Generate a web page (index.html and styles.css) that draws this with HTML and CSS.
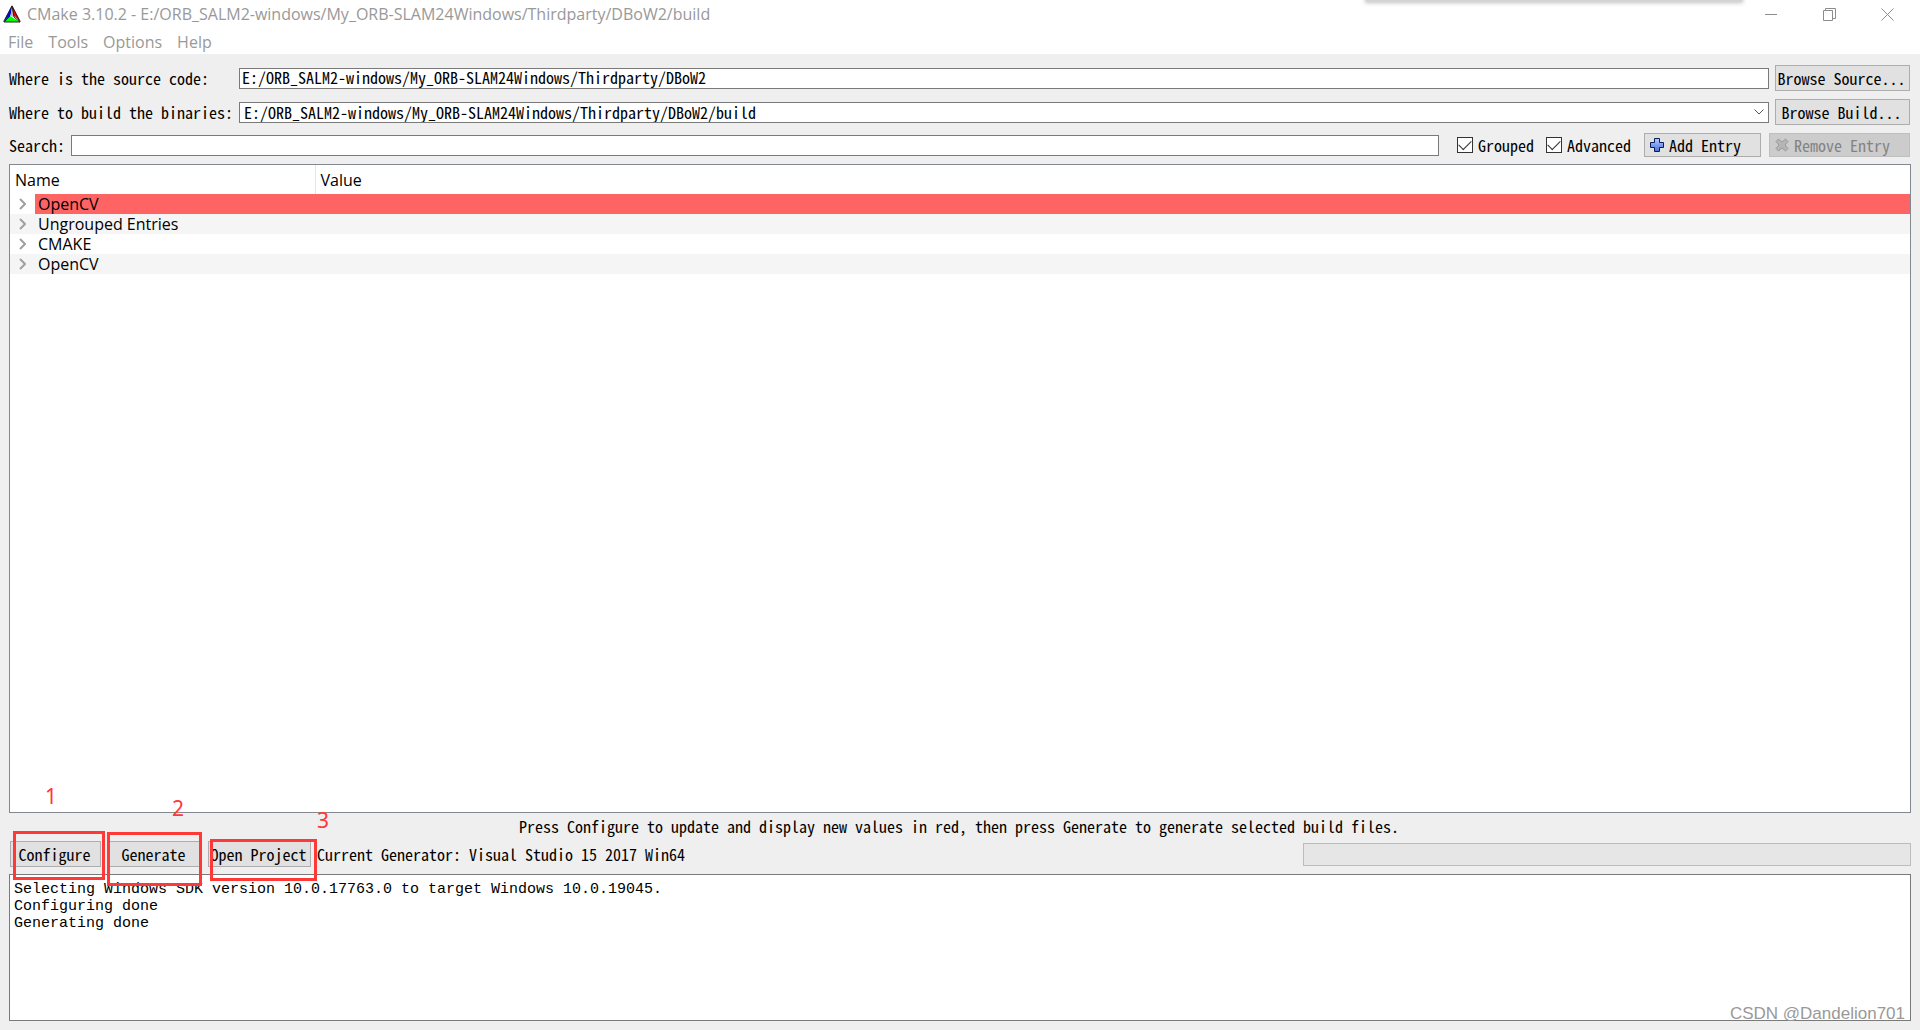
FILE: index.html
```html
<!DOCTYPE html>
<html lang="en">
<head>
<meta charset="utf-8">
<title>CMake 3.10.2 - E:/ORB_SALM2-windows/My_ORB-SLAM24Windows/Thirdparty/DBoW2/build</title>
<link rel="stylesheet" href="styles.css">
</head>
<body>
<header class="titlebar">
  <svg class="logo" width="18" height="18" viewBox="0 0 18 18" aria-hidden="true">
    <path d="M9 0 0 17 8 10Z" fill="#00f"/>
    <path d="M9 0 18 17 10 10Z" fill="#f00"/>
    <path d="M0 17 7 11 17 17Z" fill="#0f0"/>
    <path d="M9 5 11 12 7 11Z" fill="#bbb"/>
    <path d="M9 1 1 17H17ZM9 1 11 12 17 17M1 17 7 11" fill="none" stroke="#222"/>
  </svg>
  <h1 class="title">CMake 3.10.2 - E:/ORB_SALM2-windows/My_ORB-SLAM24Windows/Thirdparty/DBoW2/build</h1>
  <div class="window-buttons">
    <button type="button" aria-label="Minimize"><svg width="13" height="13" viewBox="0 0 13 13"><path d="M0 6.500H12"/></svg></button>
    <button type="button" aria-label="Restore"><svg width="13" height="13" viewBox="0 0 13 13"><path d="M.5 2.500H9.500V12.500H.5ZM2.500 2V.5H12.500V10.500H10"/></svg></button>
    <button type="button" aria-label="Close"><svg width="13" height="13" viewBox="0 0 13 13"><path d="M.5 .5 12.500 12.500M12.500 .5 .5 12.500"/></svg></button>
  </div>
  <div class="docked-edge"></div>
</header>
<nav class="menu">
  <button type="button">File</button>
  <button type="button">Tools</button>
  <button type="button">Options</button>
  <button type="button">Help</button>
</nav>
<main class="window">
  <form class="settings">
    <div class="path-row">
      <label class="path-label" for="source">Where is the source code:</label>
      <input class="field" id="source" type="text" value="E:/ORB_SALM2-windows/My_ORB-SLAM24Windows/Thirdparty/DBoW2">
      <button class="btn browse" type="button">Browse Source...</button>
    </div>
    <div class="path-row">
      <label class="path-label" for="build">Where to build the binaries:</label>
      <div class="combo">
        <select class="field" id="build"><option>E:/ORB_SALM2-windows/My_ORB-SLAM24Windows/Thirdparty/DBoW2/build</option></select>
        <svg class="combo-arrow" width="10" height="6" viewBox="0 0 10 6" aria-hidden="true"><path d="M.5 .5 5 5 9.500 .5"/></svg>
      </div>
      <button class="btn browse" type="button">Browse Build...</button>
    </div>
    <div class="search-row">
      <label class="search-label" for="search">Search:</label>
      <input class="field" id="search" type="text">
      <div class="checks">
        <label class="check"><input type="checkbox" checked>Grouped</label>
        <label class="check"><input type="checkbox" checked>Advanced</label>
      </div>
      <button class="btn add" type="button">
        <svg width="14" height="14" viewBox="0 0 14 14" aria-hidden="true"><defs><linearGradient id="plus" x2="0" y2="1"><stop stop-color="#b4ccff"/><stop offset="1" stop-color="#4670d8"/></linearGradient></defs><path d="M4.500 .5H9.500V4.500H13.500V9.500H9.500V13.500H4.500V9.500H.5V4.500H4.500Z" fill="url(#plus)" stroke="#0a1a5c"/></svg>
        Add Entry
      </button>
      <button class="btn remove" type="button" disabled>
        <svg width="14" height="14" viewBox="0 0 14 14" aria-hidden="true"><path d="M3.500 1 7 4 10.500 1 13 3.500 10 7 13 10.500 10.500 13 7 10 3.500 13 1 10.500 4 7 1 3.500Z" fill="#b5b5b5" stroke="#9a9a9a"/></svg>
        Remove Entry
      </button>
    </div>
  </form>
  <section class="tree">
    <table>
      <thead><tr><th class="name-col">Name</th><th>Value</th></tr></thead>
      <tbody>
        <tr class="new"><td><div class="cell"><span class="branch"><svg width="7" height="12" viewBox="0 0 7 12"><path d="M1 1 6 6 1 11"/></svg></span><span class="entry">OpenCV</span></div></td><td></td></tr>
        <tr><td><div class="cell"><span class="branch"><svg width="7" height="12" viewBox="0 0 7 12"><path d="M1 1 6 6 1 11"/></svg></span><span class="entry">Ungrouped Entries</span></div></td><td></td></tr>
        <tr><td><div class="cell"><span class="branch"><svg width="7" height="12" viewBox="0 0 7 12"><path d="M1 1 6 6 1 11"/></svg></span><span class="entry">CMAKE</span></div></td><td></td></tr>
        <tr><td><div class="cell"><span class="branch"><svg width="7" height="12" viewBox="0 0 7 12"><path d="M1 1 6 6 1 11"/></svg></span><span class="entry">OpenCV</span></div></td><td></td></tr>
      </tbody>
    </table>
  </section>
  <p class="hint">Press Configure to update and display new values in red, then press Generate to generate selected build files.</p>
  <div class="actions">
    <button class="btn action" type="button">Configure</button>
    <button class="btn action" type="button">Generate</button>
    <button class="btn open" type="button">Open Project</button>
    <span class="generator">Current Generator: Visual Studio 15 2017 Win64</span>
    <div class="progress" role="progressbar" aria-label="Progress"></div>
    <div class="mark mark-1"></div><span class="num num-1">1</span>
    <div class="mark mark-2"></div><span class="num num-2">2</span>
    <div class="mark mark-3"></div><span class="num num-3">3</span>
  </div>
  <div class="output">
    <textarea class="log" aria-label="Output" readonly>Selecting Windows SDK version 10.0.17763.0 to target Windows 10.0.19045.
Configuring done
Generating done</textarea>
    <span class="watermark">CSDN @Dandelion701</span>
  </div>
</main>
</body>
</html>
```
FILE: styles.css
```css
* { box-sizing: border-box; }

body {
  margin: 0;
  min-height: 100vh;
  display: flex;
  flex-direction: column;
  background: #fff;
  color: #000;
  font: 16px/20px "Noto Sans Mono CJK SC", "Liberation Mono", monospace;
}

button, input, select { font: inherit; color: inherit; }

.titlebar {
  position: relative;
  display: flex;
  align-items: center;
  height: 30px;
  padding: 0 4px 2px 3px;
  gap: 6px;
  color: #999;
}
.title { margin: 0; flex: 1; font: 16px/20px "Open Sans", sans-serif; }
.window-buttons { display: flex; }
.window-buttons button {
  width: 58px;
  height: 28px;
  padding: 0;
  border: 0;
  background: none;
}
.window-buttons svg { display: block; margin: auto; fill: none; stroke: #8c8c8c; }
.docked-edge {
  position: absolute;
  top: -4px;
  right: 178px;
  width: 376px;
  height: 6px;
  background: #d4d4d4;
  box-shadow: 0 0 4px 1px #c4c4c4;
}

.menu { display: flex; gap: 15px; height: 24px; padding-left: 8px; }
.menu button {
  padding: 0;
  border: 0;
  background: none;
  color: #999;
  font: 16px/24px "Open Sans", sans-serif;
}

.window {
  flex: 1;
  display: flex;
  flex-direction: column;
  padding: 11px 9px 9px;
  background: #efefef;
}

.settings { display: flex; flex-direction: column; gap: 8px; padding-bottom: 7px; }
.path-row, .search-row { display: flex; align-items: center; padding-right: 1px; }
.path-label { flex: none; width: 230px; white-space: nowrap; }
.search-label { width: 62px; }

.field {
  flex: 1;
  min-width: 0;
  height: 21px;
  padding: 0 2px 2px;
  border: 1px solid #7a7a7a;
  border-radius: 0;
  background: #fff;
}
.combo { position: relative; flex: 1; display: flex; }
.combo .field { appearance: none; padding: 0 4px; line-height: 19px; }
.combo-arrow {
  position: absolute;
  right: 5px;
  top: 7px;
  fill: none;
  stroke: #555;
  pointer-events: none;
}

.btn {
  display: flex;
  align-items: center;
  justify-content: center;
  height: 26px;
  padding: 0 2px 0 0;
  border: 1px solid #adadad;
  background: #e1e1e1;
  white-space: nowrap;
}
.browse { width: 135px; margin-left: 6px; }
.add, .remove { height: 24px; gap: 5px; justify-content: flex-start; padding-left: 5px; }
.add { width: 117px; }
.remove { width: 141px; margin-left: 8px; border-color: #bfbfbf; background: #ccc; color: #838383; }

.checks { display: flex; gap: 12px; margin: 0 13px 0 18px; }
.check { display: flex; align-items: center; gap: 5px; padding-bottom: 1px; }
.check input {
  appearance: none;
  width: 16px;
  height: 16px;
  margin: 0;
  border: 1px solid #333;
  background: #fff;
  display: grid;
  place-items: center;
}
.check input:checked::before {
  content: "";
  width: 11px;
  height: 6px;
  margin-bottom: 3px;
  border: solid #333;
  border-width: 0 0 1px 1px;
  transform: rotate(-45deg);
}

.tree {
  flex: 1;
  border: 1px solid #828790;
  background: #fff;
  font: 16px/20px "Open Sans", sans-serif;
}
.tree table { width: 100%; border-collapse: collapse; table-layout: fixed; }
.tree th {
  height: 29px;
  padding: 1px 5px 0;
  text-align: left;
  font-weight: normal;
}
.tree .name-col { width: 305px; border-right: 1px solid #e5e5e5; }
.tree td { height: 20px; padding: 0; }
.tree tbody tr:nth-child(even) { background: #f5f5f5; }
.tree .new td, .tree .new .entry { background: #ff6464; }
.cell { display: flex; }
.branch { display: flex; align-items: center; width: 25px; height: 20px; padding-left: 9px; background: #fff; }
tr:nth-child(even) .branch { background: #f5f5f5; }
.branch svg { fill: none; stroke: #a0a0a0; stroke-width: 2; }
.entry { flex: 1; padding-left: 3px; }

.hint { margin: 0; padding: 0 2px 2px 0; line-height: 26px; text-align: center; }

.actions { position: relative; display: flex; align-items: center; padding-left: 1px; margin-bottom: 7px; }
.action { width: 91px; margin-right: 8px; }
.open { width: 103px; }
.generator { flex: 1; padding-left: 6px; }
.progress { width: 32%; height: 23px; border: 1px solid #bcbcbc; background: #e6e6e6; }

.mark { position: absolute; border: 3px solid #ff3838; }
.mark-1 { left: 4px; top: -10px; width: 92px; height: 49px; }
.mark-2 { left: 98px; top: -9px; width: 95px; height: 54px; }
.mark-3 { left: 201px; top: -2px; width: 107px; height: 42px; }
.mark, .num { z-index: 1; }
.num { position: absolute; color: #ff3838; font: 21px/28px "Noto Sans", sans-serif; }
.num-1 { left: 36px; top: -59px; }
.num-2 { left: 163px; top: -47px; }
.num-3 { left: 308px; top: -35px; }

.output { position: relative; display: flex; height: 147px; }
.log {
  flex: 1;
  padding: 6px 4px;
  border: 1px solid #7a7a7a;
  border-radius: 0;
  outline: 0;
  resize: none;
  background: #fff;
  color: #000;
  font: 15px/17px "Liberation Mono", monospace;
}
.watermark {
  position: absolute;
  right: 6px;
  bottom: -3px;
  color: #999;
  font: 17px/20px "Liberation Sans", sans-serif;
}
```
